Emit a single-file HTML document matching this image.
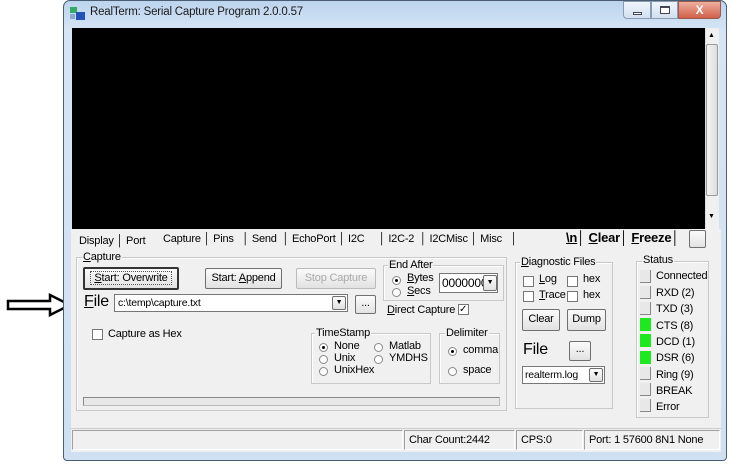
<!DOCTYPE html>
<html><head><style>
*{box-sizing:border-box;margin:0;padding:0}
body{width:731px;height:464px;background:#fff;position:relative;overflow:hidden;font-family:"Liberation Sans",sans-serif;font-size:11px;letter-spacing:-0.2px;color:#000}
.a{position:absolute}
.win{left:63px;top:0;width:664px;height:461px;background:linear-gradient(#bcd4ee,#d6e5f5 30px,#cfe0f3);border:1px solid #4a5d73;border-radius:7px 7px 4px 4px}
.btn{position:absolute;background:linear-gradient(#fbfbfb,#e2e2e2);border:1px solid #707070;border-radius:2px;text-align:center;line-height:19px;font-size:11px}
.grp{position:absolute;border:1px solid #c8c8c8;box-shadow:1px 1px 0 #fff inset}
.lbl{position:absolute;background:#f0f0f0;padding:0 1px;top:-7px;left:5px;font-size:11px;line-height:12px}
.cb{position:absolute;width:11px;height:11px;border:1px solid #777;background:#fff}
.rd{position:absolute;width:9px;height:9px;border:1px solid #888;border-radius:50%;background:#fff}
.rd.on::after{content:"";position:absolute;left:2px;top:2px;width:3px;height:3px;background:#000;border-radius:50%}
.led{position:absolute;left:4px;width:11px;height:13px;border-right:1px solid #888;border-bottom:1px solid #888;background:#e8e8e8}
.led.g{background:#1ee81e;border-color:#1ee81e}
.sb{position:absolute;top:430px;height:20px;border:1px solid #a0a0a0;border-right-color:#fff;border-bottom-color:#fff;line-height:18px;padding-left:4px}
u{text-decoration:underline}
</style></head><body>
<svg class="a" style="left:6px;top:293px" width="66" height="24"><path d="M2 8 H44 V2 L64 12 L44 22 V16 H2 Z" fill="#fff" stroke="#000" stroke-width="2.5"/></svg>
<div class="a win"></div>
<svg class="a" style="left:70px;top:7px" width="16" height="14"><rect x="0" y="0" width="7" height="6" fill="#3a6"/><rect x="6" y="5" width="9" height="8" fill="#2450b8"/><rect x="0" y="7" width="5" height="5" fill="#8ac"/></svg>
<div class="a" style="left:90px;top:6px;font-size:11.5px;color:#1a1a1a">RealTerm: Serial Capture Program 2.0.0.57</div>
<div class="a" style="left:623px;top:1px;width:28px;height:18px;border:1px solid #8a9cb4;border-radius:0 0 0 4px;background:linear-gradient(#f0f5fc,#d2e0f0)"><div class="a" style="left:9px;top:10px;width:9px;height:3px;border:1px solid #445;background:#fff"></div></div>
<div class="a" style="left:651px;top:1px;width:27px;height:18px;border:1px solid #8a9cb4;background:linear-gradient(#f0f5fc,#d2e0f0)"><div class="a" style="left:8px;top:4px;width:10px;height:8px;border:1px solid #445;border-top-width:2px;background:#fff"></div></div>
<div class="a" style="left:678px;top:1px;width:43px;height:18px;border:1px solid #9a5a50;border-radius:0 0 4px 0;background:linear-gradient(#eeb0a0,#d06048);color:#fff;font-weight:bold;text-align:center;line-height:16px;font-size:12px">X</div>
<div class="a" style="left:72px;top:28px;width:633px;height:201px;background:#000"></div>
<div class="a" style="left:705px;top:28px;width:14px;height:201px;background:#f0f0f0;border-left:1px solid #ddd"></div>
<div class="a" style="left:708px;top:32px;font-size:7px">▲</div>
<div class="a" style="left:706px;top:44px;width:12px;height:152px;background:linear-gradient(90deg,#f4f4f4,#ddd);border:1px solid #999;border-radius:2px"></div>
<div class="a" style="left:708px;top:213px;font-size:7px">▼</div>
<div class="a" style="left:71px;top:229px;width:650px;height:200px;background:#f0f0f0"></div>
<div class="a" style="left:79px;top:235px">Display │ Port</div>
<div class="a" style="left:163px;top:233px">Capture │ Pins &nbsp; │ Send &nbsp;│ EchoPort │ I2C &nbsp;&nbsp;&nbsp;&nbsp;│ I2C-2 &nbsp;│ I2CMisc │ Misc &nbsp;&nbsp;│</div>
<div class="a" style="left:566px;top:230px;font-size:13px;font-weight:bold"><u>\n</u>│ <u>C</u>lear│ <u>F</u>reeze│</div>
<div class="btn" style="left:689px;top:230px;width:17px;height:18px"></div>
<div class="grp" style="left:76px;top:257px;width:431px;height:154px"><span class="lbl"><u>C</u>apture</span></div>
<div class="btn" style="left:83px;top:267px;width:96px;height:23px;border:2px solid #333;line-height:18px"><span style="border:1px dotted #555;padding:0 3px"><u>S</u>tart: Overwrite</span></div>
<div class="btn" style="left:205px;top:268px;width:77px;height:21px">Start: <u>A</u>ppend</div>
<div class="btn" style="left:296px;top:268px;width:80px;height:21px;color:#aaa;border-color:#bbb">Stop Capture</div>
<div class="grp" style="left:383px;top:265px;width:121px;height:36px"><span class="lbl" style="left:4px">End After</span></div>
<div class="rd on" style="left:392px;top:276px"></div><div class="a" style="left:407px;top:272px"><u>B</u>ytes</div>
<div class="rd" style="left:392px;top:288px"></div><div class="a" style="left:407px;top:285px"><u>S</u>ecs</div>
<div class="a" style="left:439px;top:273px;width:59px;height:20px;background:#fff;border:1px solid #777;padding:2px 2px;font-size:12px">0000000</div>
<div class="btn" style="left:483px;top:275px;width:14px;height:16px;line-height:14px;font-size:7px">▼</div>
<div class="a" style="left:84px;top:293px;font-size:16px"><u>F</u>ile</div>
<div class="a" style="left:114px;top:294px;width:234px;height:18px;background:#fff;border:1px solid #777;padding:2px 3px;font-size:10.5px">c:\temp\capture.txt</div>
<div class="btn" style="left:332px;top:296px;width:14px;height:14px;line-height:12px;font-size:7px">▼</div>
<div class="btn" style="left:355px;top:295px;width:21px;height:19px;line-height:14px">...</div>
<div class="a" style="left:387px;top:304px"><u>D</u>irect Capture</div>
<div class="cb" style="left:458px;top:304px;font-size:10px;line-height:9px">✓</div>
<div class="cb" style="left:92px;top:329px"></div><div class="a" style="left:108px;top:328px">Capture as Hex</div>
<div class="grp" style="left:311px;top:333px;width:120px;height:51px"><span class="lbl" style="left:3px">TimeStamp</span></div>
<div class="rd on" style="left:319px;top:343px"></div><div class="a" style="left:334px;top:340px">None</div>
<div class="rd" style="left:374px;top:343px"></div><div class="a" style="left:389px;top:340px">Matlab</div>
<div class="rd" style="left:319px;top:355px"></div><div class="a" style="left:334px;top:352px">Unix</div>
<div class="rd" style="left:374px;top:355px"></div><div class="a" style="left:389px;top:352px">YMDHS</div>
<div class="rd" style="left:319px;top:367px"></div><div class="a" style="left:334px;top:364px">UnixHex</div>
<div class="grp" style="left:439px;top:333px;width:61px;height:51px"><span class="lbl" style="left:5px">Delimiter</span></div>
<div class="rd on" style="left:448px;top:347px"></div><div class="a" style="left:463px;top:344px">comma</div>
<div class="rd" style="left:448px;top:367px"></div><div class="a" style="left:463px;top:364px">space</div>
<div class="a" style="left:83px;top:397px;width:417px;height:9px;border:1px solid #bbb;border-left-color:#888;border-top-color:#888;background:#e8e8e8"></div>
<div class="grp" style="left:515px;top:262px;width:98px;height:147px"><span class="lbl" style="left:4px"><u>D</u>iagnostic Files</span></div>
<div class="cb" style="left:523px;top:276px"></div><div class="a" style="left:539px;top:273px"><u>L</u>og</div>
<div class="cb" style="left:567px;top:276px"></div><div class="a" style="left:583px;top:273px">hex</div>
<div class="cb" style="left:523px;top:291px"></div><div class="a" style="left:539px;top:289px"><u>T</u>race</div>
<div class="cb" style="left:567px;top:291px"></div><div class="a" style="left:583px;top:289px">hex</div>
<div class="btn" style="left:522px;top:309px;width:38px;height:22px">Clear</div>
<div class="btn" style="left:567px;top:309px;width:39px;height:22px">Dump</div>
<div class="a" style="left:523px;top:341px;font-size:16px">File</div>
<div class="btn" style="left:569px;top:341px;width:22px;height:20px;line-height:15px">...</div>
<div class="a" style="left:522px;top:366px;width:83px;height:18px;background:#fff;border:1px solid #777;padding:2px 2px;font-size:10.5px">realterm.log</div>
<div class="btn" style="left:589px;top:368px;width:14px;height:14px;line-height:12px;font-size:7px">▼</div>
<div class="grp" style="left:636px;top:261px;width:73px;height:157px"><span class="lbl" style="left:5px;top:-8px">Status</span></div>
<div class="a" style="left:636px;top:270px;width:73px">
<div class="led" style="top:0"></div><div class="a" style="left:20px;top:0">Connected</div>
<div class="led" style="top:16px"></div><div class="a" style="left:20px;top:17px">RXD (2)</div>
<div class="led" style="top:32px"></div><div class="a" style="left:20px;top:33px">TXD (3)</div>
<div class="led g" style="top:48px"></div><div class="a" style="left:20px;top:50px">CTS (8)</div>
<div class="led g" style="top:64px"></div><div class="a" style="left:20px;top:66px">DCD (1)</div>
<div class="led g" style="top:81px"></div><div class="a" style="left:20px;top:82px">DSR (6)</div>
<div class="led" style="top:97px"></div><div class="a" style="left:20px;top:99px">Ring (9)</div>
<div class="led" style="top:113px"></div><div class="a" style="left:20px;top:115px">BREAK</div>
<div class="led" style="top:129px"></div><div class="a" style="left:20px;top:131px">Error</div>
</div>
<div class="a" style="left:71px;top:428px;width:650px;height:24px;background:#f0f0f0;border-top:1px solid #ccc"></div>
<div class="sb" style="left:72px;width:331px"></div>
<div class="sb" style="left:404px;width:111px">Char Count:2442</div>
<div class="sb" style="left:516px;width:67px">CPS:0</div>
<div class="sb" style="left:584px;width:136px">Port: 1 57600 8N1 None</div>
</body></html>
